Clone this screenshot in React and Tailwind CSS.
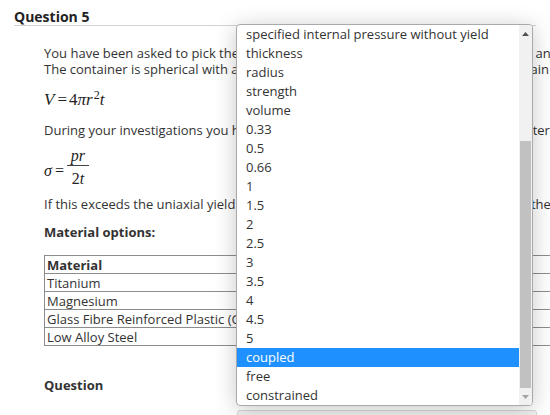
import React from "react";

const options = [
  "specified internal pressure without yield",
  "thickness",
  "radius",
  "strength",
  "volume",
  "0.33",
  "0.5",
  "0.66",
  "1",
  "1.5",
  "2",
  "2.5",
  "3",
  "3.5",
  "4",
  "4.5",
  "5",
  "coupled",
  "free",
  "constrained",
];

const rows = [
  ["Titanium", "880", "4430"],
  ["Magnesium", "190", "1740"],
  ["Glass Fibre Reinforced Plastic (GFRP)", "650", "1900"],
  ["Low Alloy Steel", "1000", "7850"],
];

export default function App() {
  return (
    <div className="relative w-[550px] h-[415px] overflow-hidden bg-white font-['Open_Sans',sans-serif] text-[#333]">
      <div className="mx-[14px] pt-[8px] border-b border-[#d3d3d3]">
        <h2 className="text-[14px] leading-[17px] font-bold text-[#222]">Question 5</h2>
      </div>

      <div className="pl-[44px] pt-[19px] whitespace-nowrap text-[13px] leading-[16px]">
        <p>
          You have been asked to pick the most suitable material for the storage container and its wall thickness.
        </p>
        <p>
          The container is spherical with a radius of R and wall thickness t and it must contain a gas at pressure p.
        </p>

        <div className="mt-[12px] h-[22px] leading-[22px] text-[17px] font-['Liberation_Serif',serif] text-[#222]">
          <i>V</i>
          <span className="ml-[3px] mr-[2px]">=</span>
          <span>4</span>
          <i>πr</i>
          <sup className="text-[12px] ml-[1px]">2</sup>
          <i>t</i>
        </div>

        <p className="mt-[11px]">
          During your investigations you have seen that the wall stress in a vessel of diameter 2R is:
        </p>

        <div className="mt-[9px] flex items-center font-['Liberation_Serif',serif] text-[16px] text-[#222]">
          <span className="pt-[7px] leading-[18px]">
            <i>σ</i>
            <span className="ml-[3px] mr-[3px]">=</span>
          </span>
          <span className="flex flex-col items-center">
            <i className="leading-[18px] px-[2px]">pr</i>
            <span className="h-[1px] w-[22px] bg-[#444]" />
            <span className="pt-[4px] leading-[18px]">
              2<i>t</i>
            </span>
          </span>
        </div>

        <p className="mt-[8px]">
          If this exceeds the uniaxial yield stress of the material, the vessels will fail. Select the best option below.
        </p>

        <p className="mt-[12px] font-bold">Material options:</p>

        <table className="mt-[15px] border-collapse table-fixed w-[560px] text-[13px]">
          <colgroup>
            <col className="w-[230px]" />
            <col className="w-[150px]" />
            <col className="w-[180px]" />
          </colgroup>
          <tbody>
            <tr>
              <td className="border border-[#8c8c8c] h-[18px] p-0 pl-[2px] leading-[16px] font-bold overflow-hidden">Material</td>
              <td className="border border-[#8c8c8c] h-[18px] p-0 pl-[2px] leading-[16px] font-bold">Yield (MPa)</td>
              <td className="border border-[#8c8c8c] h-[18px] p-0 pl-[2px] leading-[16px] font-bold"></td>
            </tr>
            {rows.map((r) => (
              <tr key={r[0]}>
                <td className="border border-[#8c8c8c] h-[18px] p-0 pl-[2px] leading-[16px] overflow-hidden">{r[0]}</td>
                <td className="border border-[#8c8c8c] h-[18px] p-0 pl-[2px] leading-[16px]">{r[1]}</td>
                <td className="border border-[#8c8c8c] h-[18px] p-0 pl-[2px] leading-[16px]"></td>
              </tr>
            ))}
          </tbody>
        </table>

        <p className="mt-[31px] font-bold">Question</p>
      </div>

      <div className="absolute left-[237px] top-[410px] w-[300px] h-[30px] rounded-[3px] border border-[#d6d6d6] bg-[#f0f0f0]" />

      <div className="absolute left-[236px] top-[24px] w-[297px] h-[382px] flex overflow-hidden rounded-[4px] border border-[#a9a9a9] bg-white shadow-[0_3px_22px_rgba(0,0,0,0.22)] text-[13px]">
        <ul className="flex-1">
          {options.map((o) => (
            <li
              key={o}
              className={
                o === "coupled"
                  ? "h-[19px] leading-[19px] pl-[9px] bg-[#1e90ff] text-white"
                  : "h-[19px] leading-[19px] pl-[9px] text-[#333]"
              }
            >
              {o}
            </li>
          ))}
        </ul>
        <div className="w-[13px] flex flex-col bg-[#f1f1f1]">
          <div className="h-[17px] flex items-center justify-center">
            <svg width="7" height="4" viewBox="0 0 7 4">
              <path d="M0 4 L3.5 0 L7 4 Z" fill="#505050" />
            </svg>
          </div>
          <div className="flex-1 flex flex-col justify-end">
            <div className="h-[247px] mx-[1px] bg-[#c1c1c1]" />
          </div>
          <div className="h-[17px] flex items-center justify-center">
            <svg width="7" height="4" viewBox="0 0 7 4">
              <path d="M0 0 L7 0 L3.5 4 Z" fill="#a3a3a3" />
            </svg>
          </div>
        </div>
      </div>
    </div>
  );
}
